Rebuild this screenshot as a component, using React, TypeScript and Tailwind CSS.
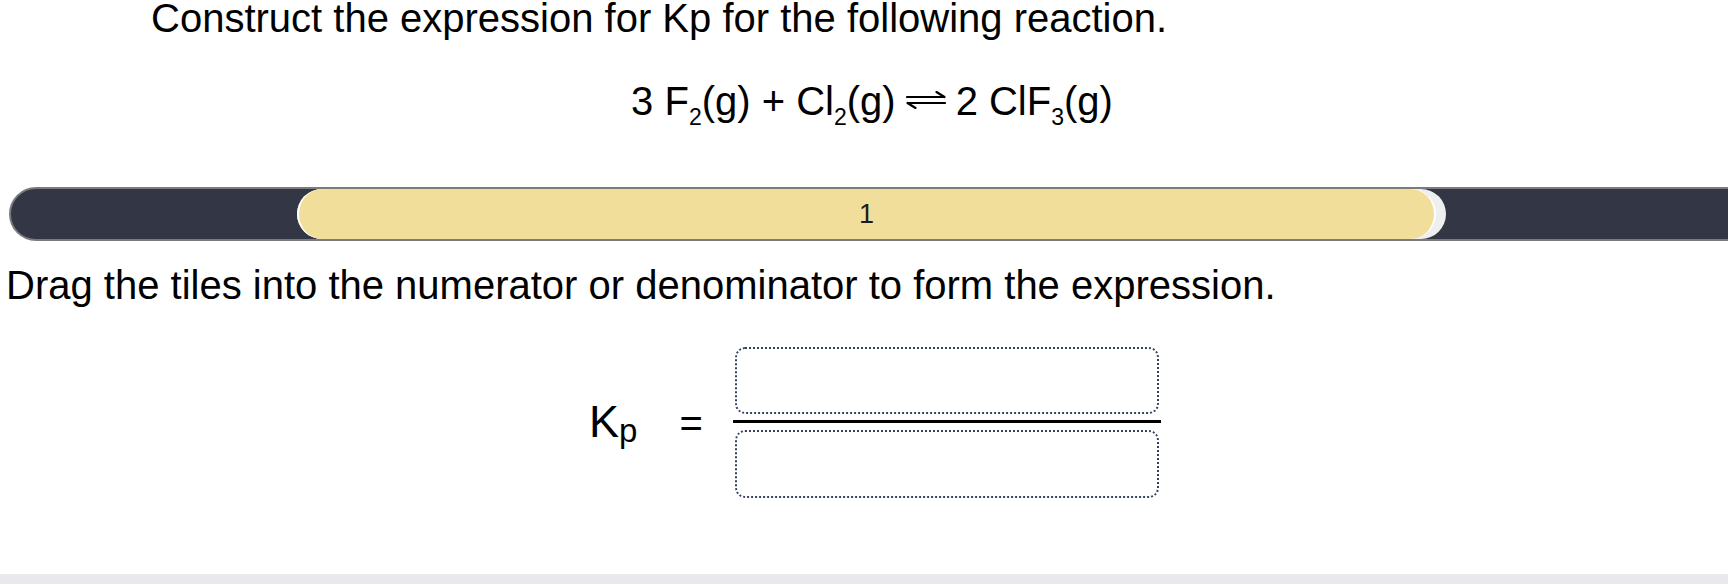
import React from 'react';

const Sub: React.FC<{ children: React.ReactNode }> = ({ children }) => (
  <span className="text-[23px] leading-none align-[-10px]">{children}</span>
);

const EqArrow: React.FC = () => (
  <svg width="40" height="18" viewBox="0 0 40 18" className="mx-[10px] self-center mt-[-2px]" fill="none">
    <path d="M1 6 H38.5 M30.5 1 L38.5 6" stroke="#000" strokeWidth="2.2" strokeLinecap="round" />
    <path d="M39 12 H1.5 M9.5 17 L1.5 12" stroke="#000" strokeWidth="2.2" strokeLinecap="round" />
  </svg>
);

const App: React.FC = () => {
  return (
    <div className="min-h-[584px] w-full overflow-hidden bg-white flex flex-col text-black font-['Liberation_Sans',Arial,sans-serif]">
      {/* question */}
      <div className="pl-[151px] text-[40px] leading-[36px]">
        Construct the expression for Kp for the following reaction.
      </div>

      {/* reaction */}
      <div className="mt-[45px] flex justify-center pl-[16px] text-[40px] leading-[40px] h-[40px]">
        <span>
          3 F<Sub>2</Sub>(g) + Cl<Sub>2</Sub>(g)
        </span>
        <EqArrow />
        <span>
          2 ClF<Sub>3</Sub>(g)
        </span>
      </div>

      {/* step bar */}
      <div className="mt-[66px] ml-[9px] mr-[-40px] h-[54px] rounded-full border-2 border-[#7b7b7b] bg-[#333745]">
        <div className="ml-[286px] w-[1149px] h-full rounded-full bg-[#efefef]">
          <div className="w-[1139px] h-full rounded-full bg-[#f2de9b] border-x-2 border-white flex items-center justify-center text-[27px] text-[#1c1c1c]">
            1
          </div>
        </div>
      </div>

      {/* instruction */}
      <div className="mt-[24px] pl-[6px] text-[40px] leading-[40px]">
        Drag the tiles into the numerator or denominator to form the expression.
      </div>

      {/* expression */}
      <div className="mt-[42px] flex items-center pl-[589px]">
        <div className="text-[45px] leading-none">
          K<span className="text-[33px] align-[-5px]">p</span>
        </div>
        <div className="ml-[42px] text-[40px] leading-none">=</div>
        <div className="ml-[30px] w-[428px] flex flex-col">
          <div className="h-[67px] mx-[2px] rounded-[10px] border-2 border-dotted border-[#34425e]" />
          <div className="mt-[6px] h-[3px] bg-black" />
          <div className="mt-[7px] h-[68px] mx-[2px] rounded-[10px] border-2 border-dotted border-[#34425e]" />
        </div>
      </div>

      <div className="mt-auto h-[10px] bg-[#e9e8ed]" />
    </div>
  );
};

export default App;
